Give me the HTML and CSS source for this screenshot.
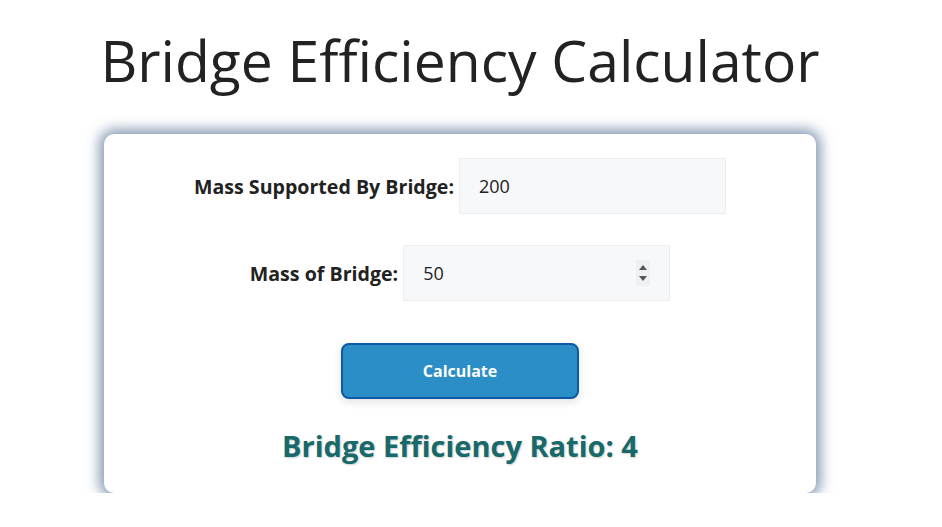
FILE: index.html
```html
<!DOCTYPE html>
<html lang="en">

<head>
	<meta charset="UTF-8">
	<meta name="viewport" content="width=device-width, initial-scale=1.0">
	<title>Bridge Efficiency Calculator</title>
	<link rel="stylesheet" href="styles.css">
</head>

<body>
	<div class="page">
		<h1>Bridge Efficiency Calculator</h1>

		<div id="calculator">
			<div class="row">
				<label for="supported">Mass Supported By Bridge:</label>
				<input type="text" id="supported" value="200">
			</div>

			<div class="row">
				<label for="bridge">Mass of Bridge:</label>
				<div class="field">
					<input type="text" id="bridge" value="50">
					<span class="spinner">
						<svg width="10" height="22" viewBox="0 0 10 22">
							<path d="M1 8 L5 3 L9 8 Z" fill="#555"/>
							<path d="M1 14 L5 19 L9 14 Z" fill="#555"/>
						</svg>
					</span>
				</div>
			</div>

			<button type="button" onclick="calculate()">Calculate</button>

			<h3 id="result">Bridge Efficiency Ratio: 4</h3>
		</div>
	</div>

	<script>
function calculate() {
	const supported = parseFloat(document.getElementById('supported').value);
	const bridge = parseFloat(document.getElementById('bridge').value);
	const result = document.getElementById('result');

	if (isNaN(supported) || isNaN(bridge) || bridge === 0) {
		result.textContent = 'Please enter valid numbers';
		return;
	}
	result.textContent = 'Bridge Efficiency Ratio: ' + (supported / bridge);
}
	</script>
</body>

</html>
```

FILE: styles.css
```css
body {
	font-family: 'Open Sans', 'Noto Sans', sans-serif;
	background-color: #fff;
	margin: 0;
	color: #222;
}

.page {
	width: 920px;
	display: flex;
	flex-direction: column;
	align-items: center;
}

h1 {
	font-size: 57px;
	font-weight: 400;
	margin: 26px 0 40px;
	color: #222;
	line-height: 68px;
}

#calculator {
	background-color: #fff;
	width: 712px;
	height: 359px;
	box-sizing: border-box;
	padding-top: 24px;
	border-radius: 10px;
	box-shadow: 0 0 14px 4px rgba(70, 100, 140, 0.7);
	display: flex;
	flex-direction: column;
	align-items: center;
}

.row {
	display: flex;
	align-items: center;
	gap: 5px;
	margin-bottom: 31px;
}

label {
	font-size: 19.6px;
	font-weight: 700;
	color: #222;
}

input {
	width: 267px;
	height: 56px;
	padding: 0 19px;
	border: 1px solid #eceef0;
	background-color: #f7f8f9;
	box-sizing: border-box;
	font-family: inherit;
	font-size: 18px;
	color: #222;
}

.field {
	position: relative;
}

.spinner {
	position: absolute;
	right: 20px;
	top: 15px;
	width: 14px;
	height: 26px;
	background-color: #eef0f2;
	display: flex;
	align-items: center;
	justify-content: center;
}

button {
	margin-top: 11px;
	width: 238px;
	height: 56px;
	background-color: #2b8ec6;
	color: #fff;
	border: 2px solid #0c59a6;
	border-radius: 8px;
	font-family: inherit;
	font-size: 16px;
	font-weight: 700;
	cursor: pointer;
	box-shadow: 0 3px 8px rgba(0, 0, 0, 0.12);
}

#result {
	margin: 27px 0 0;
	font-size: 29px;
	font-weight: 700;
	color: #17696a;
	text-shadow: 1px 1px 2px rgba(0, 0, 0, 0.2);
}
```
